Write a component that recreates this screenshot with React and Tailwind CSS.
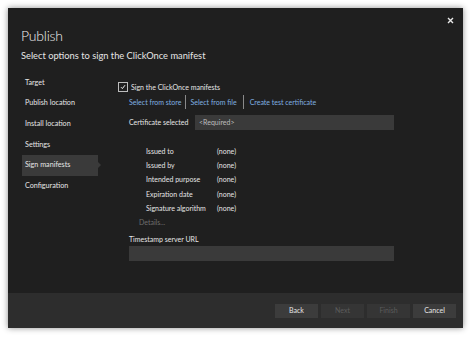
import React from "react";

const navItems = ["Target", "Publish location", "Install location", "Settings", "Sign manifests", "Configuration"];
const details = [
  ["Issued to", "(none)"],
  ["Issued by", "(none)"],
  ["Intended purpose", "(none)"],
  ["Expiration date", "(none)"],
  ["Signature algorithm", "(none)"],
];

export default function App() {
  return (
    <div className="w-[474px] h-[337px] bg-white pt-[8px] pl-[8px] overflow-hidden" style={{ fontFamily: 'Lato, "Noto Sans", sans-serif' }}>
      <div className="relative w-[455px] h-[320px] bg-[#1f1f1f] flex flex-col shadow-[0_0_6px_rgba(0,0,0,0.45)] text-[#e6e6e6]">
        <button className="absolute right-[7px] top-[6px] w-[12px] h-[12px] flex items-center justify-center">
          <svg width="7" height="7" viewBox="0 0 7 7"><path d="M1 1L6 6M6 1L1 6" stroke="#e8e8e8" strokeWidth="1.4" /></svg>
        </button>
        <div className="pl-[13px] pt-[18px] flex-1 flex flex-col">
          <div className="text-[14px] font-light leading-[20px] tracking-[-0.2px] text-[#f0f0f0]">Publish</div>
          <div className="text-[9.3px] leading-[12px] mt-[4px] text-[#e6e6e6]">Select options to sign the ClickOnce manifest</div>
          <div className="flex mt-[11px] whitespace-nowrap">
            <div className="w-[97px] flex flex-col pl-[1px]">
              {navItems.map((n) => (
                <div key={n} className={`relative h-[20.6px] flex items-center pl-[3px] text-[7.2px] w-[76px] ${n === "Sign manifests" ? "bg-[#3a3a3a]" : ""}`}>
                  {n}
                  {n === "Sign manifests" && (
                    <span className="absolute right-[-3px] top-[7px] w-0 h-0 border-y-[3px] border-y-transparent border-l-[3px] border-l-[#3a3a3a]" />
                  )}
                </div>
              ))}
            </div>
            <div className="flex flex-col text-[7px]">
              <div className="flex items-center h-[12px] mt-[8px]">
                <span className="w-[10px] h-[10px] border border-[#bdbdbd] flex items-center justify-center">
                  <svg width="6" height="6" viewBox="0 0 6 6"><path d="M1 3.2L2.4 4.6L5 1.2" stroke="#f0f0f0" strokeWidth="1" fill="none" /></svg>
                </span>
                <span className="ml-[3px]">Sign the ClickOnce manifests</span>
              </div>
              <div className="flex items-center h-[14px] mt-[2px] ml-[11px] text-[#7fb0e0]">
                <span>Select from store</span>
                <span className="w-px h-[14px] bg-[#8a8a8a] mx-[4px]" />
                <span>Select from file</span>
                <span className="w-px h-[14px] bg-[#8a8a8a] mx-[6px]" />
                <span>Create test certificate</span>
              </div>
              <div className="flex items-center ml-[11px] mt-[6px]">
                <span className="w-[66px]">Certificate selected</span>
                <div className="w-[199px] h-[15px] bg-[#3a3a3a] flex items-center pl-[4px] text-[#bdbdbd]">&lt;Required&gt;</div>
              </div>
              <div className="flex flex-col ml-[28px] mt-[14px]">
                {details.map(([k, v]) => (
                  <div key={k} className="flex h-[14.3px] items-center">
                    <span className="w-[71px]">{k}</span>
                    <span>{v}</span>
                  </div>
                ))}
              </div>
              <div className="ml-[21px] mt-[1px] h-[12px] flex items-center text-[#6e6e6e]">Details...</div>
              <div className="ml-[11px] mt-[6px] h-[10px] flex items-center">Timestamp server URL</div>
              <div className="ml-[11px] mt-[2px] w-[265px] h-[15px] bg-[#3a3a3a]" />
            </div>
          </div>
        </div>
        <div className="h-[35px] bg-[#2d2d2d] flex items-center justify-end gap-[3px] pr-[7px] text-[7px]">
          <button className="w-[43px] h-[14px] bg-[#3c3c3c] text-[#e6e6e6]">Back</button>
          <button className="w-[43px] h-[14px] bg-[#353535] text-[#5c5c5c]">Next</button>
          <button className="w-[43px] h-[14px] bg-[#353535] text-[#5c5c5c]">Finish</button>
          <button className="w-[43px] h-[14px] bg-[#3c3c3c] text-[#e6e6e6]">Cancel</button>
        </div>
      </div>
    </div>
  );
}
